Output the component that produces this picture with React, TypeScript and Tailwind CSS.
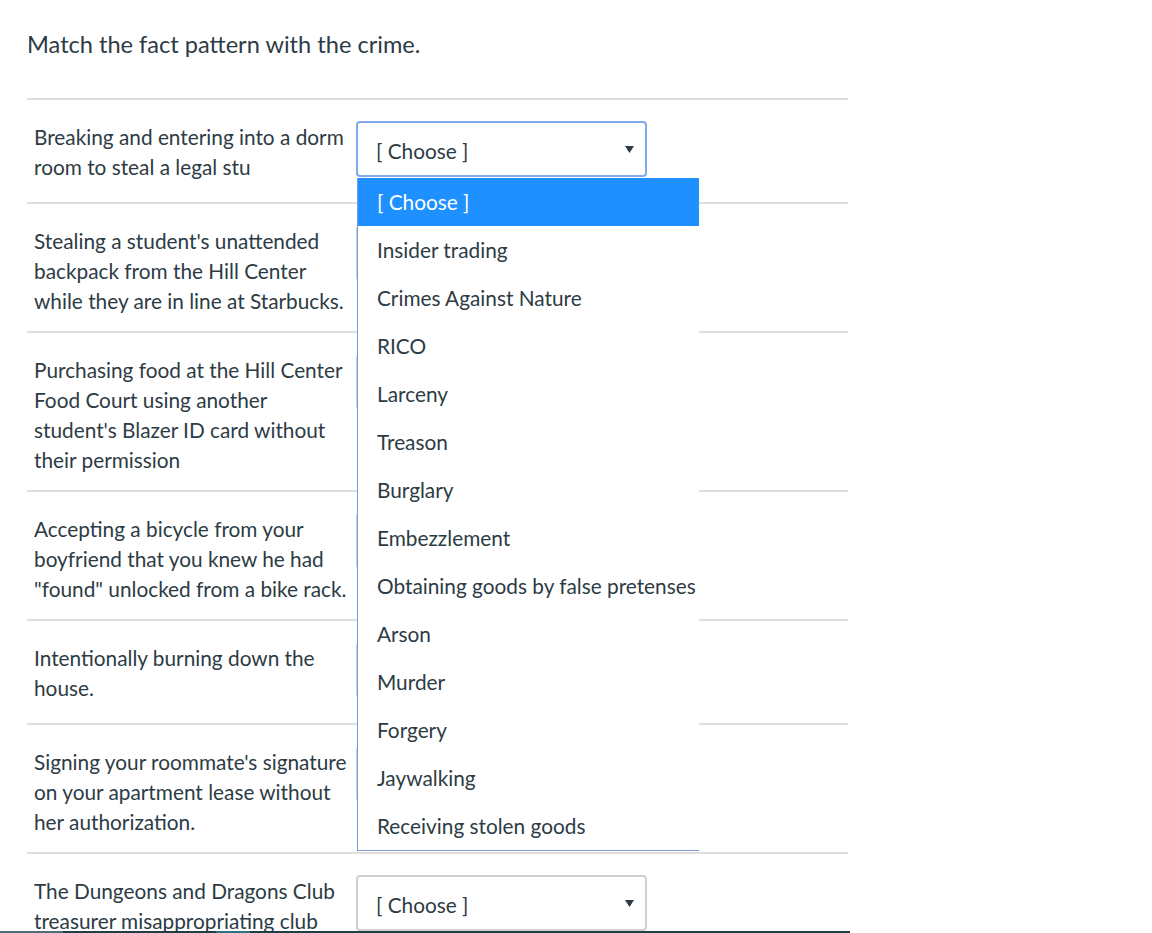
import React from "react";

const rows = [
  "Breaking and entering into a dorm room to steal a legal stu",
  "Stealing a student's unattended backpack from the Hill Center while they are in line at Starbucks.",
  "Purchasing food at the Hill Center Food Court using another student's Blazer ID card without their permission",
  "Accepting a bicycle from your boyfriend that you knew he had \"found\" unlocked from a bike rack.",
  "Intentionally burning down the house.",
  "Signing your roommate's signature on your apartment lease without her authorization.",
  "The Dungeons and Dragons Club treasurer misappropriating club funds.",
];

const options = [
  "[ Choose ]",
  "Insider trading",
  "Crimes Against Nature",
  "RICO",
  "Larceny",
  "Treason",
  "Burglary",
  "Embezzlement",
  "Obtaining goods by false pretenses",
  "Arson",
  "Murder",
  "Forgery",
  "Jaywalking",
  "Receiving stolen goods",
];

const Arrow = () => (
  <svg width="9" height="7" viewBox="0 0 9 7">
    <polygon points="0,0 9,0 4.5,7" fill="#2d3b45" />
  </svg>
);

const Select = ({ open }: { open?: boolean }) => {
  return (
    <div className="relative">
      <div
        className={
          open
            ? "flex h-[56px] w-[291px] items-center justify-between rounded-[4px] border-2 border-[#82a8ec] bg-white pl-[18px] pr-[11px]"
            : "flex h-[56px] w-[291px] items-center justify-between rounded-[4px] border-2 border-[#d0d0d0] bg-white pl-[18px] pr-[11px]"
        }
      >
        <span className="pt-[3px]">[ Choose ]</span>
        <Arrow />
      </div>
      {open && (
        <ul className="absolute left-[1px] top-[57px] z-10 w-[342px] border-b border-l border-[#7b9bd6] bg-white">
          {options.map((o, i) => (
            <li
              key={o}
              className={
                i === 0
                  ? "flex h-[48px] items-center bg-[#1e90ff] pl-[19px] text-white"
                  : "flex h-[48px] items-center pl-[19px]"
              }
            >
              {o}
            </li>
          ))}
        </ul>
      )}
    </div>
  );
};

export default function App() {
  return (
    <div className="min-h-[933px] bg-white pl-[27px] pt-[27px] text-[#2d3b45] font-['Lato',sans-serif]">
      <div className="text-[23.6px] leading-[34px]">Match the fact pattern with the crime.</div>

      <div className="mt-[37px] w-[821px]">
        {rows.map((r, i) => (
          <div key={i} className="flex items-start border-t-2 border-[#dedede] pb-[15px] pt-[21px] text-[20.8px] leading-[30px]">
            <div className="w-[327px] pl-[7px] pt-[1px]">{r}</div>
            <div className="ml-[2px] mb-[10px]">
              <Select open={i === 0} />
            </div>
          </div>
        ))}
      </div>

      <div className="fixed bottom-0 left-0 flex h-[2px] w-[850px] bg-[#1f3d47]">
        <div className="w-[63px] bg-[#4f6d78]" />
        <div className="w-[153px]" />
        <div className="w-[34px] bg-[#2b7282]" />
      </div>
    </div>
  );
}
